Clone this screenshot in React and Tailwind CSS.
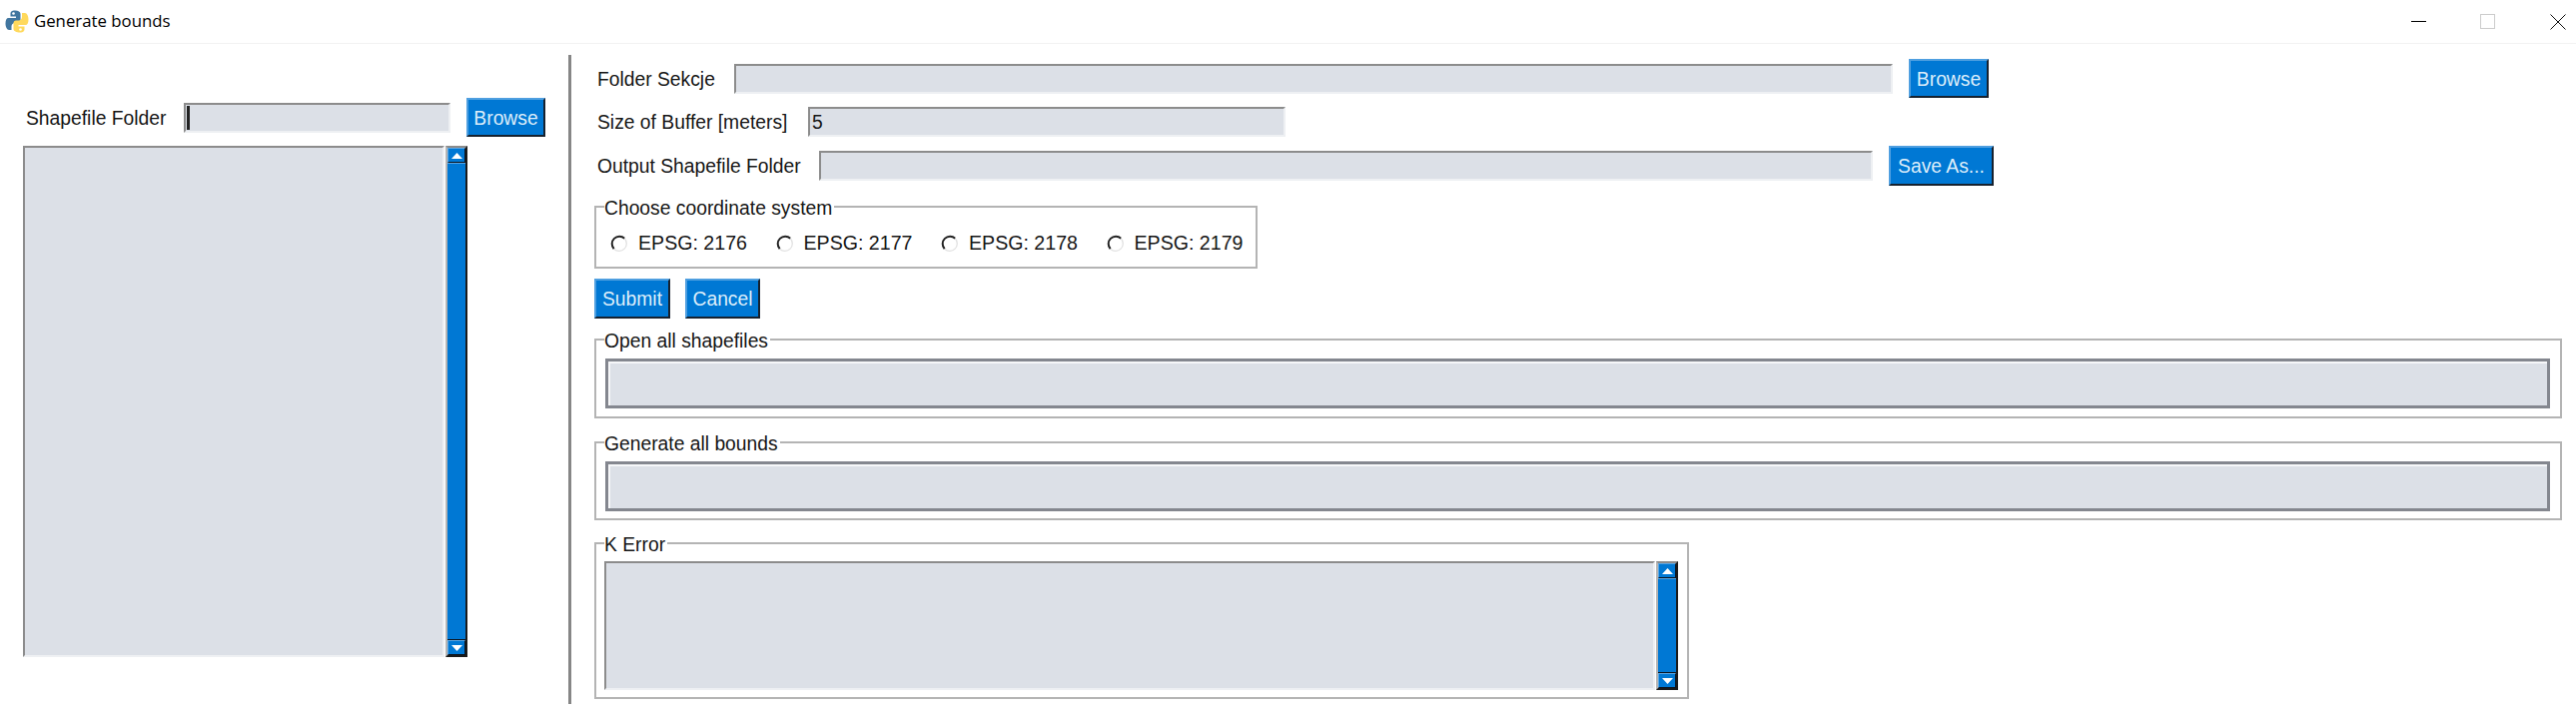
const uiFont = "font-['Liberation_Sans',Arial,sans-serif] text-[19.3px] leading-none text-[#161616]";

function PythonIcon() {
  return (
    <svg width="24" height="23" viewBox="0 0 24 23" className="shrink-0">
      <path d="M10 .5C6.500.5 5.500 2 5.500 4V6.500H11V8H3.500C1.500 8 .5 10 .5 13.500S2 20 4 20H6.500V16.500C6.500 14.500 8 13 10 13H13C14.500 13 15.500 12 15.500 10.500V4C15.500 2 13.500.5 10 .5Z" fill="#41769f" />
      <path d="M15 22.500C18.500 22.500 19.500 21 19.500 19V16.500H13.500V15H20.500C22.500 15 23.500 13 23.500 9.500S22 3 20 3H17V6.500C17 9 15.500 10.500 13.500 10.500H11C9.500 10.500 8.500 11.500 8.500 13V19C8.500 21 11.500 22.500 15 22.500Z" fill="#ffd95c" />
      <circle cx="8.500" cy="3.500" r="1.300" fill="#fff" />
      <circle cx="15.500" cy="19.500" r="1.300" fill="#fff" />
    </svg>
  );
}

function WindowControls() {
  return (
    <div className="ml-auto flex items-center">
      <div className="h-[1.500px] w-[15px] bg-black" />
      <div className="ml-[54px] h-[15px] w-[15px] border border-[#cccccc]" />
      <svg width="16" height="16" viewBox="0 0 16 16" className="ml-[55px] mr-[10px]">
        <path d="M.5.5 15.500 15.500M15.500.5 .5 15.500" stroke="#111" strokeWidth="1" fill="none" />
      </svg>
    </div>
  );
}

function Entry({ className, children }) {
  return (
    <div className={`flex h-[30px] items-center border-2 border-t-[#8c8c8c] border-l-[#8c8c8c] border-r-[#eef0f3] border-b-[#eef0f3] bg-[#dce0e7] ${className}`}>
      {children}
    </div>
  );
}

function Button({ className, children }) {
  return (
    <div className={`flex items-center justify-center border-2 border-t-[#4f9fe0] border-l-[#4f9fe0] border-r-[#16212e] border-b-[#16212e] bg-[#0078d4] pt-[2px] font-['Liberation_Sans',Arial,sans-serif] text-[19.3px] leading-none text-[#dcedfa] ${className}`}>
      {children}
    </div>
  );
}

function ScrollButton({ down }) {
  return (
    <div className="flex h-[15px] shrink-0 items-center justify-center border border-t-[#5aa6e3] border-l-[#5aa6e3] border-r-[#0b1520] border-b-[#0b1520] bg-[#0078d4]">
      <svg width="11" height="6" viewBox="0 0 11 6">
        <path d={down ? "M0 0H11L5.500 6Z" : "M0 6H11L5.500 0Z"} fill="#fff" />
      </svg>
    </div>
  );
}

function Scrollbar({ className }) {
  return (
    <div className={`flex flex-col border-2 border-t-[#8c8c8c] border-l-[#b5b5b5] border-r-[#1a1a1a] border-b-[#1a1a1a] bg-[#0078d4] ${className}`}>
      <ScrollButton />
      <div className="flex-1 border-t border-t-[#5aa6e3] border-b border-b-[#0b1520] bg-[#0078d4]" />
      <ScrollButton down />
    </div>
  );
}

function Frame({ title, className, children }) {
  return (
    <div className={`relative border-2 border-[#b4b4b4] ${className}`}>
      <span className={`absolute left-[8px] top-[-9px] bg-white pr-[2px] ${uiFont}`}>{title}</span>
      {children}
    </div>
  );
}

function Progress() {
  return (
    <div className="ml-[9px] mt-[18px] h-[50px] w-[1947px] border-[3px] border-[#84878f]">
      <div className="h-full w-full border-t-2 border-l-2 border-[#f6f7f9] bg-[#dce0e7]" />
    </div>
  );
}

function Radio({ label }) {
  return (
    <div className="flex w-[165.500px] shrink-0 items-center">
      <svg width="18" height="18" viewBox="0 0 18 18" className="shrink-0">
        <circle cx="9" cy="9" r="7.500" fill="#fff" />
        <path d="M14.300 3.700A7.500 7.500 0 0 0 3.700 14.300" stroke="#222" strokeWidth="2" fill="none" />
        <path d="M3.700 14.300A7.500 7.500 0 0 0 14.300 3.700" stroke="#e2e2e2" strokeWidth="1.300" fill="none" />
      </svg>
      <span className="ml-[10px] text-[19.6px]">{label}</span>
    </div>
  );
}

export default function App() {
  return (
    <div className={`flex h-[715px] w-[2579px] flex-col overflow-hidden bg-white ${uiFont}`}>
      <div className="flex h-[44px] shrink-0 items-center border-b border-[#f2f2f2] pl-[5px]">
        <PythonIcon />
        <span className="ml-[5px] font-['Open_Sans',sans-serif] text-[16.800px] text-black">Generate bounds</span>
        <WindowControls />
      </div>

      <div className="flex flex-1">
        <div className="w-[569px] shrink-0 pt-[54px]">
          <div className="flex items-center pl-[26px]">
            <span className="w-[158px] pt-[2px]">Shapefile Folder</span>
            <Entry className="w-[267px]">
              <div className="ml-[1px] h-[24px] w-[3px] bg-[#222]" />
            </Entry>
            <Button className="ml-[16px] h-[39px] w-[79px]">Browse</Button>
          </div>
          <div className="mt-[9px] flex pl-[23px]">
            <div className="h-[512px] w-[422px] border-2 border-t-[#8c8c8c] border-l-[#8c8c8c] border-r-[#eef0f3] border-b-[#eef0f3] bg-[#dce0e7]" />
            <Scrollbar className="ml-[1px] h-[512px] w-[22px]" />
          </div>
        </div>

        <div className="mt-[11px] h-[650px] w-[3px] shrink-0 bg-[#868686]" />

        <div className="flex-1 pl-[23px] pt-[15px]">
          <div className="flex items-center">
            <span className="ml-[3px] w-[137px] pt-[2px]">Folder Sekcje</span>
            <Entry className="w-[1160px]" />
            <Button className="ml-[16px] h-[39px] w-[80px]">Browse</Button>
          </div>
          <div className="mt-[9px] flex items-center">
            <span className="ml-[3px] w-[211px] pt-[2px]">Size of Buffer [meters]</span>
            <Entry className="w-[478px] pl-[2px] pt-[2px]">5</Entry>
          </div>
          <div className="mt-[9px] flex items-center">
            <span className="ml-[3px] w-[222px] pt-[2px]">Output Shapefile Folder</span>
            <Entry className="w-[1055px]" />
            <Button className="ml-[16px] h-[40px] w-[105px]">Save As...</Button>
          </div>

          <Frame title="Choose coordinate system" className="mt-[20px] h-[63px] w-[664px]">
            <div className="flex pl-[14px] pt-[26px]">
              <Radio label="EPSG: 2176" />
              <Radio label="EPSG: 2177" />
              <Radio label="EPSG: 2178" />
              <Radio label="EPSG: 2179" />
            </div>
          </Frame>

          <div className="mt-[10px] flex gap-[15px]">
            <Button className="h-[40px] w-[76px]">Submit</Button>
            <Button className="h-[40px] w-[75px]">Cancel</Button>
          </div>

          <Frame title="Open all shapefiles" className="mt-[20px] h-[80px] w-[1970px]">
            <Progress />
          </Frame>
          <Frame title="Generate all bounds" className="mt-[23px] h-[79px] w-[1970px]">
            <Progress />
          </Frame>
          <Frame title="K Error" className="mt-[22px] h-[157px] w-[1096px]">
            <div className="ml-[8px] mt-[17px] flex">
              <div className="h-[129px] w-[1052px] border-2 border-t-[#8c8c8c] border-l-[#8c8c8c] border-r-[#eef0f3] border-b-[#eef0f3] bg-[#dce0e7]" />
              <Scrollbar className="ml-[1px] h-[129px] w-[22px]" />
            </div>
          </Frame>
        </div>
      </div>
    </div>
  );
}
